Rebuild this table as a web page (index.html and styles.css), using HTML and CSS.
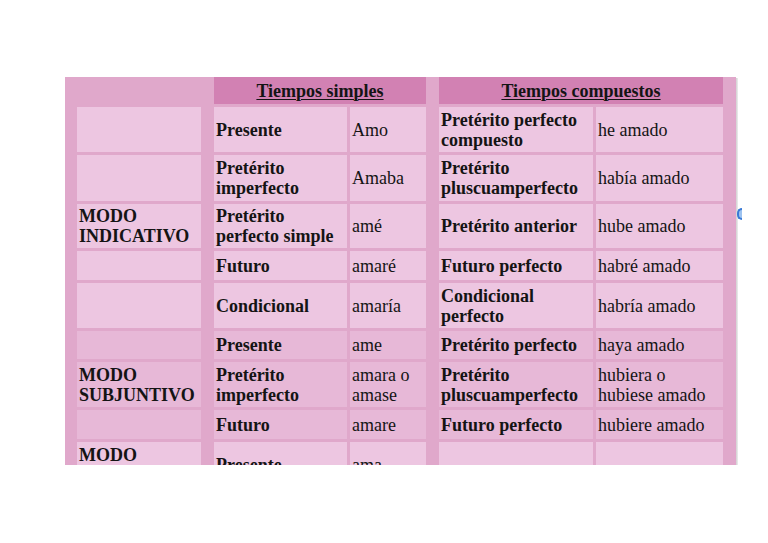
FILE: index.html
```html
<!DOCTYPE html>
<html lang="es">
<head>
<meta charset="utf-8">
<title>Conjugación del verbo amar</title>
<link rel="stylesheet" href="styles.css">
</head>
<body>
<div class="page">
  <div class="frame">
    <table class="conj">
      <colgroup>
        <col class="c-modo"><col class="c-sp"><col class="c-s1"><col class="c-s2"><col class="c-sp"><col class="c-c1"><col class="c-c2">
      </colgroup>
      <tr class="h">
        <th class="blank"></th>
        <td class="sp" rowspan="10"></td>
        <th colspan="2" class="head"><u>Tiempos simples</u></th>
        <td class="sp" rowspan="10"></td>
        <th colspan="2" class="head"><u>Tiempos compuestos</u></th>
      </tr>
      <tr class="r45">
        <th></th>
        <th>Presente</th><td>Amo</td>
        <th>Pretérito perfecto compuesto</th><td>he amado</td>
      </tr>
      <tr class="r46">
        <th></th>
        <th>Pretérito imperfecto</th><td>Amaba</td>
        <th>Pretérito pluscuamperfecto</th><td>había amado</td>
      </tr>
      <tr class="r44">
        <th>MODO INDICATIVO</th>
        <th>Pretérito perfecto simple</th><td>amé</td>
        <th>Pretérito anterior</th><td>hube amado</td>
      </tr>
      <tr class="r29">
        <th></th>
        <th>Futuro</th><td>amaré</td>
        <th>Futuro perfecto</th><td>habré amado</td>
      </tr>
      <tr class="r45">
        <th></th>
        <th>Condicional</th><td>amaría</td>
        <th>Condicional perfecto</th><td>habría amado</td>
      </tr>
      <tr class="r28 subj">
        <th></th>
        <th>Presente</th><td>ame</td>
        <th>Pretérito perfecto</th><td>haya amado</td>
      </tr>
      <tr class="r45 subj">
        <th>MODO SUBJUNTIVO</th>
        <th>Pretérito imperfecto</th><td>amara o amase</td>
        <th>Pretérito pluscuamperfecto</th><td>hubiera o hubiese amado</td>
      </tr>
      <tr class="r29 subj">
        <th></th>
        <th>Futuro</th><td>amare</td>
        <th>Futuro perfecto</th><td>hubiere amado</td>
      </tr>
      <tr class="r45">
        <th>MODO IMPERATIVO</th>
        <th>Presente</th><td>ama</td>
        <th></th><td></td>
      </tr>
    </table>
  </div>
  <div class="edge"><span class="knob"></span></div>
</div>
</body>
</html>
```

FILE: styles.css
```css
html, body {
  margin: 0;
  padding: 0;
  background: #ffffff;
}

.page {
  display: flex;
  align-items: flex-start;
  padding: 77px 0 0 65px;
}

.frame {
  width: 671px;
  height: 388px;
  overflow: hidden;
  background: #e0a8cb;
  padding: 0 10px 0 9px;
  box-sizing: border-box;
}

.conj {
  width: 652px;
  margin-top: -3px;
  table-layout: fixed;
  border-collapse: separate;
  border-spacing: 3px;
  font-family: "Liberation Serif", "Times New Roman", serif;
  font-size: 18px;
  line-height: 20px;
  color: #141414;
}

.c-modo { width: 124px; }
.c-sp { width: 7px; }
.c-s1 { width: 133px; }
.c-s2 { width: 76px; }
.c-c1 { width: 154px; }
.c-c2 { width: 127px; }

.conj th,
.conj td {
  box-sizing: border-box;
  padding: 1px 2px;
  text-align: left;
  vertical-align: middle;
  background: #edc6e1;
}

.conj th { font-weight: bold; }
.conj td { font-weight: normal; }

.conj .sp,
.conj .blank {
  background: transparent;
  padding: 0;
}

.conj .head {
  background: #d281b3;
  text-align: center;
}

.conj .head u {
  text-decoration-thickness: 1px;
  text-underline-offset: 2px;
}

.h { height: 27px; }
.r45 { height: 45px; }
.r46 { height: 46px; }
.r44 { height: 44px; }
.r29 { height: 29px; }
.r28 { height: 28px; }

.subj th,
.subj td {
  background: #e7b8d7;
}

.edge {
  position: relative;
  width: 2px;
  height: 387px;
  margin-top: 1px;
  background: linear-gradient(to right, #d0d0d0, #eeeeee);
}

.knob {
  position: absolute;
  top: 130px;
  left: 1px;
  width: 5px;
  height: 12px;
  box-sizing: border-box;
  border: 2px solid #3a7ad6;
  border-right: none;
  border-radius: 5px 0 0 5px;
  background: #9cc2f0;
}
```
